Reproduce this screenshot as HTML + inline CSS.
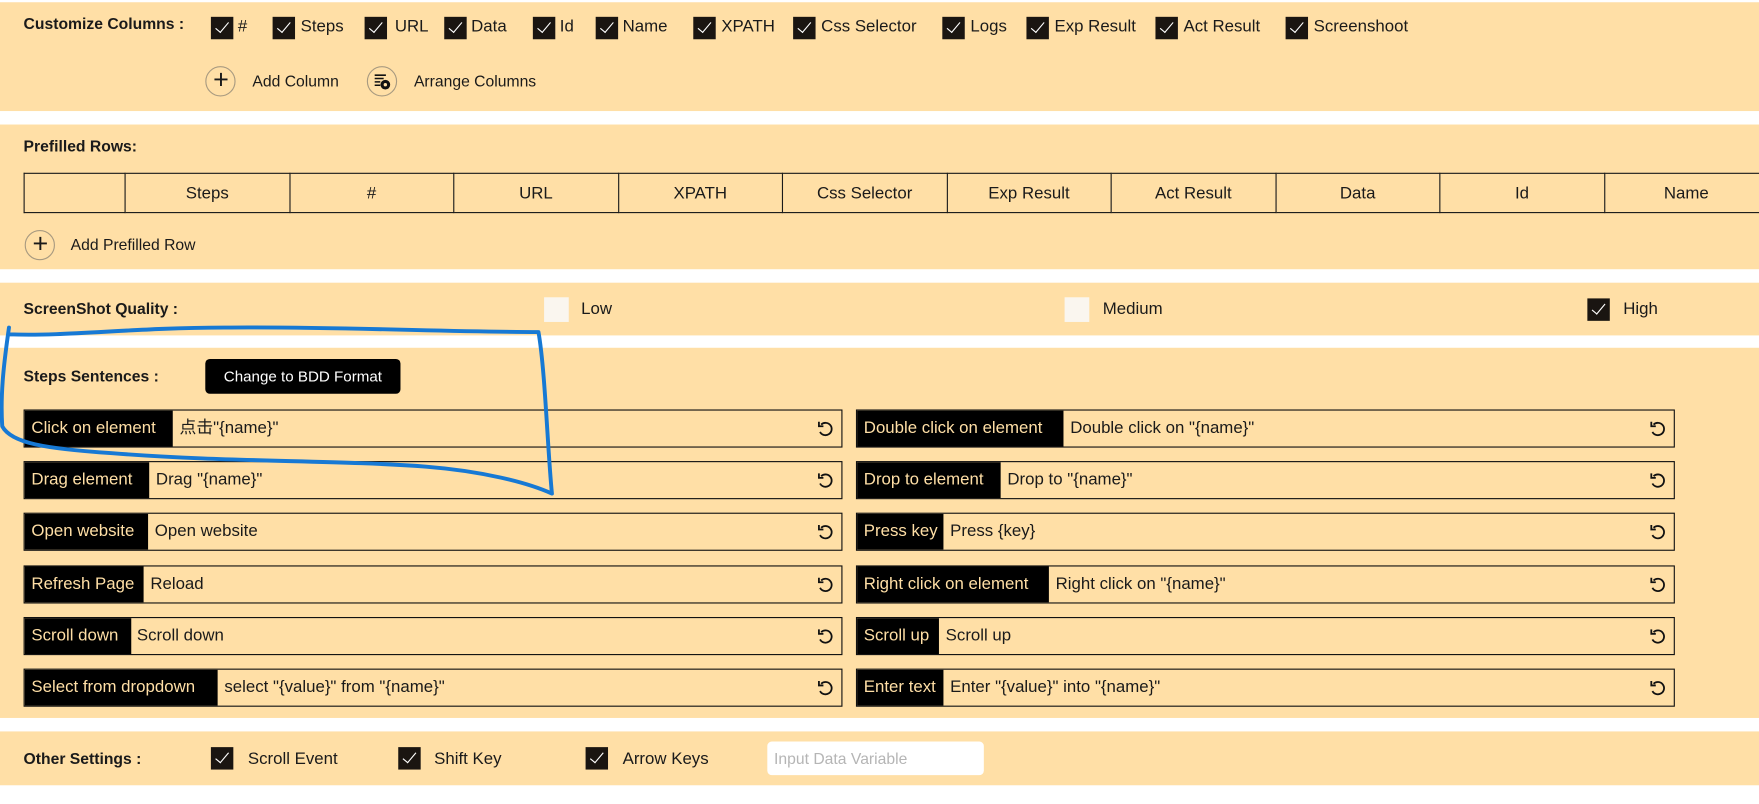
<!DOCTYPE html>
<html><head><meta charset="utf-8"><style>
html,body{margin:0;padding:0;background:#fff;width:1759px;height:804px;overflow:hidden}
#w{position:absolute;left:0;top:0;width:1568px;height:717px;transform:scale(1.12181);transform-origin:0 0;font-family:"Liberation Sans","Noto Sans CJK SC",sans-serif;color:#1a1a1a;font-size:15px;overflow:hidden}
.s{position:absolute;left:0;width:1568px;background:#FFDFA6}
.a{position:absolute;white-space:nowrap}
.b{font-weight:bold;font-size:14px}
.cb{position:absolute;width:20px;height:20px;background:#1a1511}
.cb:after{content:"";position:absolute;left:7px;top:2px;width:5px;height:11px;border:solid #fff;border-width:0 1.6px 1.6px 0;transform:rotate(40deg)}
.ub{position:absolute;width:22px;height:22px;background:#FAF6EF}
.circ{position:absolute;width:27px;height:27px;border:1px solid #a89a80;border-radius:50%;box-sizing:border-box}
table{position:absolute;border-collapse:collapse;left:21px;top:154px;table-layout:fixed;width:1555px}
td{border:1px solid #1a1a1a;height:34px;text-align:center;font-size:15px;padding:0}
.row{position:absolute;height:32px;border:1.5px solid #111;background:#FFDFA6;box-sizing:content-box;overflow:hidden}
.lb{position:absolute;left:0;top:0;height:32px;line-height:32px;background:#000;color:#FFDFA6;padding-left:6px;font-size:15px;box-sizing:border-box;overflow:hidden;white-space:nowrap}
.tx{position:absolute;top:0;line-height:32px;font-size:15px;white-space:nowrap}
.rf{position:absolute;right:6px;top:8px}
</style></head><body><div id="w">
<div class="s" style="top:2px;height:97px"></div>
<div class="s" style="top:111px;height:129px"></div>
<div class="s" style="top:252px;height:47px"></div>
<div class="s" style="top:310px;height:330px"></div>
<div class="s" style="top:652px;height:48px"></div>

<div class="a b" style="left:21px;top:13px">Customize Columns :</div>
<div class="cb" style="left:188px;top:15px"></div><div class="a" style="left:212px;top:15px">#</div>
<div class="cb" style="left:243px;top:15px"></div><div class="a" style="left:268px;top:15px">Steps</div>
<div class="cb" style="left:325px;top:15px"></div><div class="a" style="left:352px;top:15px">URL</div>
<div class="cb" style="left:396px;top:15px"></div><div class="a" style="left:420px;top:15px">Data</div>
<div class="cb" style="left:475px;top:15px"></div><div class="a" style="left:499px;top:15px">Id</div>
<div class="cb" style="left:531px;top:15px"></div><div class="a" style="left:555px;top:15px">Name</div>
<div class="cb" style="left:618px;top:15px"></div><div class="a" style="left:643px;top:15px">XPATH</div>
<div class="cb" style="left:707px;top:15px"></div><div class="a" style="left:732px;top:15px">Css Selector</div>
<div class="cb" style="left:840px;top:15px"></div><div class="a" style="left:865px;top:15px">Logs</div>
<div class="cb" style="left:915px;top:15px"></div><div class="a" style="left:940px;top:15px">Exp Result</div>
<div class="cb" style="left:1030px;top:15px"></div><div class="a" style="left:1055px;top:15px">Act Result</div>
<div class="cb" style="left:1146px;top:15px"></div><div class="a" style="left:1171px;top:15px">Screenshoot</div>

<div class="circ" style="left:183px;top:59px"></div><div class="a" style="left:188px;top:59px;font-size:24px;line-height:26px;width:18px;text-align:center">+</div>
<div class="a" style="left:225px;top:64px;font-size:14px">Add Column</div>
<div class="circ" style="left:327px;top:59px"></div>
<svg class="a" style="left:333px;top:65px" width="16" height="16" viewBox="0 0 16 16"><path d="M1 2h10M1 5h8M1 8h5M1 11h5" stroke="#111" stroke-width="1.4"/><circle cx="10.5" cy="10.5" r="4.3" fill="#111"/><circle cx="10.5" cy="10.5" r="1.5" fill="#FFDFA6"/></svg>
<div class="a" style="left:369px;top:64px;font-size:14px">Arrange Columns</div>

<div class="a b" style="left:21px;top:122px">Prefilled Rows:</div>
<table><colgroup><col style="width:90px"><col style="width:146.5px"><col style="width:146.5px"><col style="width:146.5px"><col style="width:146.5px"><col style="width:146.5px"><col style="width:146.5px"><col style="width:146.5px"><col style="width:146.5px"><col style="width:146.5px"><col style="width:146.5px"></colgroup><tr><td></td><td>Steps</td><td>#</td><td>URL</td><td>XPATH</td><td>Css Selector</td><td>Exp Result</td><td>Act Result</td><td>Data</td><td>Id</td><td>Name</td></tr></table>
<div class="circ" style="left:22px;top:205px"></div><div class="a" style="left:27px;top:205px;font-size:24px;line-height:26px;width:18px;text-align:center">+</div>
<div class="a" style="left:63px;top:210px;font-size:14px">Add Prefilled Row</div>

<div class="a b" style="left:21px;top:267px">ScreenShot Quality :</div>
<div class="ub" style="left:485px;top:265px"></div><div class="a" style="left:518px;top:267px">Low</div>
<div class="ub" style="left:949px;top:265px"></div><div class="a" style="left:983px;top:267px">Medium</div>
<div class="cb" style="left:1415px;top:266px"></div><div class="a" style="left:1447px;top:267px">High</div>

<div class="a b" style="left:21px;top:327px">Steps Sentences :</div>
<div class="a" style="left:183px;top:320px;width:174px;height:31px;background:#000;border-radius:4px;color:#fff;font-size:13.5px;line-height:31px;text-align:center">Change to BDD Format</div>

<div class="row" style="left:21px;top:365px;width:728px"><div class="lb" style="width:132px">Click on element</div><div class="tx" style="left:138px">点击"{name}"</div><svg class="rf" width="16" height="16" viewBox="0 0 16 16"><path d="M4 4.5A5.5 5.5 0 1 1 3 11" fill="none" stroke="#111" stroke-width="1.6"/><path d="M2 2v4h4" fill="none" stroke="#111" stroke-width="1.6"/></svg></div>
<div class="row" style="left:763px;top:365px;width:728px"><div class="lb" style="width:184px">Double click on element</div><div class="tx" style="left:190px">Double click on "{name}"</div><svg class="rf" width="16" height="16" viewBox="0 0 16 16"><path d="M4 4.5A5.5 5.5 0 1 1 3 11" fill="none" stroke="#111" stroke-width="1.6"/><path d="M2 2v4h4" fill="none" stroke="#111" stroke-width="1.6"/></svg></div>

<div class="row" style="left:21px;top:411px;width:728px"><div class="lb" style="width:111px">Drag element</div><div class="tx" style="left:117px">Drag "{name}"</div><svg class="rf" width="16" height="16" viewBox="0 0 16 16"><path d="M4 4.5A5.5 5.5 0 1 1 3 11" fill="none" stroke="#111" stroke-width="1.6"/><path d="M2 2v4h4" fill="none" stroke="#111" stroke-width="1.6"/></svg></div>
<div class="row" style="left:763px;top:411px;width:728px"><div class="lb" style="width:128px">Drop to element</div><div class="tx" style="left:134px">Drop to "{name}"</div><svg class="rf" width="16" height="16" viewBox="0 0 16 16"><path d="M4 4.5A5.5 5.5 0 1 1 3 11" fill="none" stroke="#111" stroke-width="1.6"/><path d="M2 2v4h4" fill="none" stroke="#111" stroke-width="1.6"/></svg></div>

<div class="row" style="left:21px;top:457px;width:728px"><div class="lb" style="width:110px">Open website</div><div class="tx" style="left:116px">Open website</div><svg class="rf" width="16" height="16" viewBox="0 0 16 16"><path d="M4 4.5A5.5 5.5 0 1 1 3 11" fill="none" stroke="#111" stroke-width="1.6"/><path d="M2 2v4h4" fill="none" stroke="#111" stroke-width="1.6"/></svg></div>
<div class="row" style="left:763px;top:457px;width:728px"><div class="lb" style="width:77px">Press key</div><div class="tx" style="left:83px">Press {key}</div><svg class="rf" width="16" height="16" viewBox="0 0 16 16"><path d="M4 4.5A5.5 5.5 0 1 1 3 11" fill="none" stroke="#111" stroke-width="1.6"/><path d="M2 2v4h4" fill="none" stroke="#111" stroke-width="1.6"/></svg></div>

<div class="row" style="left:21px;top:504px;width:728px"><div class="lb" style="width:106px">Refresh Page</div><div class="tx" style="left:112px">Reload</div><svg class="rf" width="16" height="16" viewBox="0 0 16 16"><path d="M4 4.5A5.5 5.5 0 1 1 3 11" fill="none" stroke="#111" stroke-width="1.6"/><path d="M2 2v4h4" fill="none" stroke="#111" stroke-width="1.6"/></svg></div>
<div class="row" style="left:763px;top:504px;width:728px"><div class="lb" style="width:171px">Right click on element</div><div class="tx" style="left:177px">Right click on "{name}"</div><svg class="rf" width="16" height="16" viewBox="0 0 16 16"><path d="M4 4.5A5.5 5.5 0 1 1 3 11" fill="none" stroke="#111" stroke-width="1.6"/><path d="M2 2v4h4" fill="none" stroke="#111" stroke-width="1.6"/></svg></div>

<div class="row" style="left:21px;top:550px;width:728px"><div class="lb" style="width:95px">Scroll down</div><div class="tx" style="left:100px">Scroll down</div><svg class="rf" width="16" height="16" viewBox="0 0 16 16"><path d="M4 4.5A5.5 5.5 0 1 1 3 11" fill="none" stroke="#111" stroke-width="1.6"/><path d="M2 2v4h4" fill="none" stroke="#111" stroke-width="1.6"/></svg></div>
<div class="row" style="left:763px;top:550px;width:728px"><div class="lb" style="width:73px">Scroll up</div><div class="tx" style="left:79px">Scroll up</div><svg class="rf" width="16" height="16" viewBox="0 0 16 16"><path d="M4 4.5A5.5 5.5 0 1 1 3 11" fill="none" stroke="#111" stroke-width="1.6"/><path d="M2 2v4h4" fill="none" stroke="#111" stroke-width="1.6"/></svg></div>

<div class="row" style="left:21px;top:596px;width:728px"><div class="lb" style="width:172px">Select from dropdown</div><div class="tx" style="left:178px">select "{value}" from "{name}"</div><svg class="rf" width="16" height="16" viewBox="0 0 16 16"><path d="M4 4.5A5.5 5.5 0 1 1 3 11" fill="none" stroke="#111" stroke-width="1.6"/><path d="M2 2v4h4" fill="none" stroke="#111" stroke-width="1.6"/></svg></div>
<div class="row" style="left:763px;top:596px;width:728px"><div class="lb" style="width:77px">Enter text</div><div class="tx" style="left:83px">Enter "{value}" into "{name}"</div><svg class="rf" width="16" height="16" viewBox="0 0 16 16"><path d="M4 4.5A5.5 5.5 0 1 1 3 11" fill="none" stroke="#111" stroke-width="1.6"/><path d="M2 2v4h4" fill="none" stroke="#111" stroke-width="1.6"/></svg></div>

<div class="a b" style="left:21px;top:668px">Other Settings :</div>
<div class="cb" style="left:188px;top:666px"></div><div class="a" style="left:221px;top:668px">Scroll Event</div>
<div class="cb" style="left:355px;top:666px"></div><div class="a" style="left:387px;top:668px">Shift Key</div>
<div class="cb" style="left:522px;top:666px"></div><div class="a" style="left:555px;top:668px">Arrow Keys</div>
<div class="a" style="left:684px;top:661px;width:193px;height:30px;background:#fff;border-radius:4px;color:#b5b5b5;font-size:14px;line-height:30px;padding-left:6px;box-sizing:border-box">Input Data Variable</div>

<svg class="a" style="left:0;top:0" width="1568" height="717"><path d="M8 298C60 300 120 292 200 292C300 291 400 296 480 296C486 330 488 400 492 440C470 430 430 420 380 416C300 410 200 412 100 404C40 400 10 395 2 380C0 350 4 320 8 292" fill="none" stroke="#1779d4" stroke-width="3.5" stroke-linejoin="round" stroke-linecap="round"/></svg>
</div></body></html>
